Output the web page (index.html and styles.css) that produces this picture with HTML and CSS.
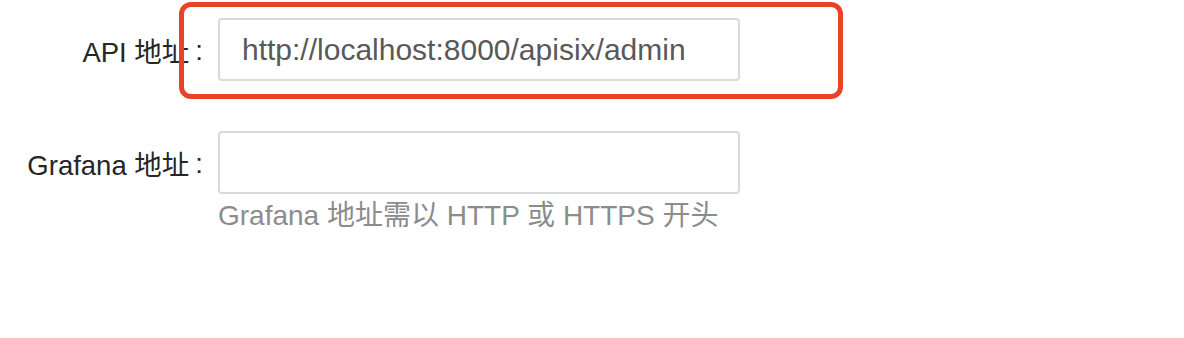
FILE: index.html
```html
<!DOCTYPE html>
<html lang="zh-CN">
<head>
<meta charset="utf-8">
<title>Settings</title>
<link rel="stylesheet" href="styles.css">
</head>
<body>
<form class="form">
  <div class="item">
    <label class="label">API 地址<span class="colon">:</span></label>
    <div class="control">
      <div class="input">http://localhost:8000/apisix/admin</div>
    </div>
    <div class="highlight"></div>
  </div>
  <div class="item">
    <label class="label">Grafana 地址<span class="colon">:</span></label>
    <div class="control">
      <div class="input"></div>
      <div class="help">Grafana 地址需以 HTTP 或 HTTPS 开头</div>
    </div>
  </div>
</form>
</body>
</html>
```
FILE: styles.css
```css
html, body {
  margin: 0;
  padding: 0;
  background: #ffffff;
}
body {
  width: 1184px;
  height: 338px;
  overflow: hidden;
  font-family: "Liberation Sans", "Noto Sans CJK SC", sans-serif;
}
.form {
  display: flex;
  flex-direction: column;
  gap: 50px;
  padding-top: 18px;
}
.item {
  position: relative;
  display: grid;
  grid-template-columns: 218px 522px;
  align-items: start;
}
.label {
  height: 63px;
  display: flex;
  align-items: center;
  justify-content: flex-end;
  padding-right: 15px;
  font-size: 27.5px;
  color: #262626;
  white-space: nowrap;
}
.colon {
  margin-left: 6px;
  position: relative;
  top: 1px;
}
.control {
  display: flex;
  flex-direction: column;
}
.input {
  box-sizing: border-box;
  height: 63px;
  border: 2px solid #d9d9d9;
  border-radius: 4px;
  padding: 0 22px;
  display: flex;
  align-items: center;
  font-size: 30px;
  color: #595959;
  white-space: nowrap;
}
.help {
  height: 44px;
  line-height: 44px;
  font-size: 28px;
  color: #8c8c8c;
  white-space: nowrap;
}
.highlight {
  position: absolute;
  left: 179px;
  top: -16px;
  width: 664px;
  height: 97px;
  box-sizing: border-box;
  border: 5px solid #ea4129;
  border-radius: 12px;
  pointer-events: none;
}
```
